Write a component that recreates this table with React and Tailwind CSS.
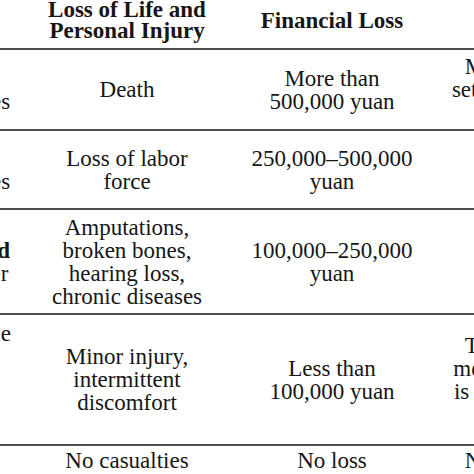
import React from "react";

// column widths: first and last columns run past the edges of the crop
const cols = "grid grid-cols-[170px_190px_220px_165px]";

const rows = [
  {
    h: "h-[81px]",
    cells: [
      [["Extreme", true], ["consequences"]],
      [["Death"]],
      [["More than"], ["500,000 yuan"]],
      [["Major public"], ["setting off mass"], ["incidents"]],
    ],
  },
  {
    h: "h-[79px]",
    cells: [
      [["Major", true], ["consequences"]],
      [["Loss of labor"], ["force"]],
      [["250,000–500,000"], ["yuan"]],
      [["Large"], ["social"], ["impact"]],
    ],
  },
  {
    h: "h-[105px]",
    cells: [
      [["Level III", true], ["Medium and", true], ["to the worker"], ["groups"]],
      [["Amputations,"], ["broken bones,"], ["hearing loss,"], ["chronic diseases"]],
      [["100,000–250,000"], ["yuan"]],
      [["Some"], ["social"], ["impact"]],
    ],
  },
  {
    h: "h-[131px]",
    cells: [
      [["Slight or little"], ["Level IV"], ["small"], ["harm"], ["cases"]],
      [["Minor injury,"], ["intermittent"], ["discomfort"]],
      [["Less than"], ["100,000 yuan"]],
      [["The negative"], ["media attention"], ["is a limited one"], ["and brief"]],
    ],
  },
];

function Cell({ lines, top }) {
  return (
    <div
      className={`flex justify-center text-center ${
        top ? "items-start pt-[3px]" : "items-center"
      }`}
    >
      <div className="leading-[23px]">
        {lines.map(([t, bold], i) => (
          <div key={i} className={`whitespace-nowrap ${bold ? "font-bold" : ""}`}>
            {t}
          </div>
        ))}
      </div>
    </div>
  );
}

export default function App() {
  return (
    <div className="w-[474px] h-[474px] overflow-hidden bg-white">
      <div className="w-[745px] ml-[-138px] mt-[-8px] text-[23px] text-[#161616] font-['Liberation_Serif','Times_New_Roman',serif]">
        {/* header */}
        <div className={`${cols} h-[58px] border-b-2 border-[#4d4d4d] font-bold`}>
          <div />
          <div className="flex items-center justify-center text-center leading-[21px]">
            <div>
              <div>Loss of Life and</div>
              <div>Personal Injury</div>
            </div>
          </div>
          <div className="flex items-center justify-center leading-[21px]">
            Financial Loss
          </div>
          <div className="flex items-center justify-center text-center leading-[21px]">
            <div>
              <div>Social</div>
              <div>Impact</div>
            </div>
          </div>
        </div>

        {rows.map((r, i) => (
          <div key={i} className={`${cols} ${r.h} border-b-2 border-[#4d4d4d]`}>
            {r.cells.map((lines, j) => (
              <Cell key={j} lines={lines} />
            ))}
          </div>
        ))}

        {/* last row, cut off by the bottom edge */}
        <div className={`${cols} h-[40px]`}>
          <Cell top lines={[["None"]]} />
          <Cell top lines={[["No casualties"]]} />
          <Cell top lines={[["No loss"]]} />
          <Cell top lines={[["No influence"]]} />
        </div>
      </div>
    </div>
  );
}
